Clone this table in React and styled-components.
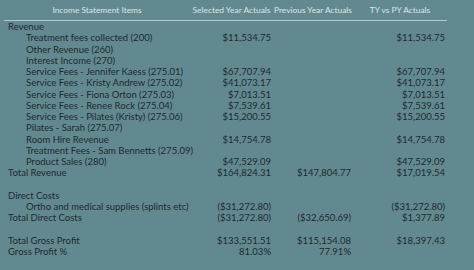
import React from 'react'
import styled, { createGlobalStyle } from 'styled-components'

const Global = createGlobalStyle`
  html, body {
    margin: 0;
    padding: 0;
    background: #628990;
  }
  body {
    font-family: "Lato", "Open Sans", sans-serif;
  }
`

const Page = styled.div`
  width: 474px;
  height: 270px;
  background: #628990;
  overflow: hidden;
  padding-left: 4px;
  box-sizing: border-box;
`

const Grid = styled.div`
  display: grid;
  grid-template-columns: 186px 83px 80px 94px;
  grid-template-rows: 21px;
  grid-auto-rows: 11.25px;
  font-size: 9.5px;
  color: #1c2a2e;
`

const Head = styled.div`
  height: 20px;
  display: flex;
  align-items: center;
  justify-content: center;
  color: #dbe6e8;
  font-size: 8.4px;
  border-bottom: 1px solid #b4c9ce;
  white-space: nowrap;
`

const Label = styled.div`
  display: flex;
  align-items: center;
  padding-left: ${p => (p.$indent ? 22 : 4)}px;
  white-space: nowrap;
`

const Value = styled.div`
  display: flex;
  align-items: center;
  justify-content: flex-end;
  padding-right: 2px;
  white-space: nowrap;
`

const rows = [
  { label: 'Revenue' },
  { label: 'Treatment fees collected (200)', sub: true, v: ['$11,534.75', '', '$11,534.75'] },
  { label: 'Other Revenue (260)', sub: true },
  { label: 'Interest Income (270)', sub: true },
  { label: 'Service Fees - Jennifer Kaess (275.01)', sub: true, v: ['$67,707.94', '', '$67,707.94'] },
  { label: 'Service Fees - Kristy Andrew (275.02)', sub: true, v: ['$41,073.17', '', '$41,073.17'] },
  { label: 'Service Fees - Fiona Orton (275.03)', sub: true, v: ['$7,013.51', '', '$7,013.51'] },
  { label: 'Service Fees - Renee Rock (275.04)', sub: true, v: ['$7,539.61', '', '$7,539.61'] },
  { label: 'Service Fees - Pilates (Kristy) (275.06)', sub: true, v: ['$15,200.55', '', '$15,200.55'] },
  { label: 'Pilates - Sarah (275.07)', sub: true },
  { label: 'Room Hire Revenue', sub: true, v: ['$14,754.78', '', '$14,754.78'] },
  { label: 'Treatment Fees - Sam Bennetts (275.09)', sub: true },
  { label: 'Product Sales (280)', sub: true, v: ['$47,529.09', '', '$47,529.09'] },
  { label: 'Total Revenue', v: ['$164,824.31', '$147,804.77', '$17,019.54'] },
  { label: '' },
  { label: 'Direct Costs' },
  { label: 'Ortho and medical supplies (splints etc)', sub: true, v: ['($31,272.80)', '', '($31,272.80)'] },
  { label: 'Total Direct Costs', v: ['($31,272.80)', '($32,650.69)', '$1,377.89'] },
  { label: '' },
  { label: 'Total Gross Profit', v: ['$133,551.51', '$115,154.08', '$18,397.43'] },
  { label: 'Gross Profit %', v: ['81.03%', '77.91%', ''] },
]

const headers = ['Income Statement Items', 'Selected Year Actuals', 'Previous Year Actuals', 'TY vs PY Actuals']

export default function App() {
  return (
    <Page>
      <Global />
      <Grid>
        {headers.map(h => <Head key={h}>{h}</Head>)}
        {rows.map((r, i) => (
          <React.Fragment key={i}>
            <Label $indent={r.sub}>{r.label}</Label>
            {(r.v || ['', '', '']).map((v, j) => <Value key={j}>{v}</Value>)}
          </React.Fragment>
        ))}
      </Grid>
    </Page>
  )
}
